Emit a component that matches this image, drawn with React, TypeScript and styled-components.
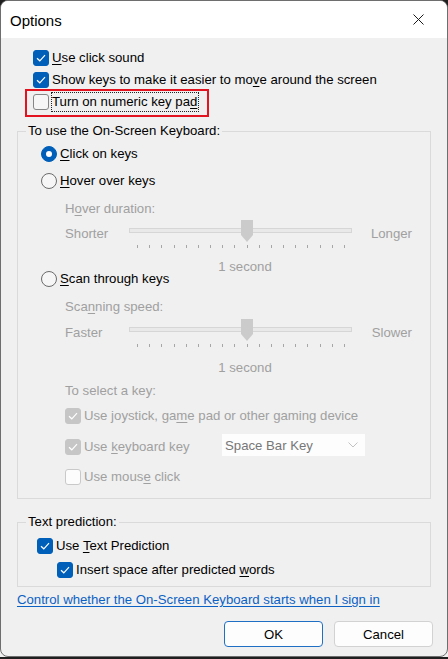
import styled, { createGlobalStyle } from 'styled-components';

const GlobalStyle = createGlobalStyle`
  html, body {
    margin: 0;
    padding: 0;
  }

  body {
    background: linear-gradient(#1f1f1f 0 24px, #f0f0f0 24px);
    font-family: 'Liberation Sans', Arial, sans-serif;
  }
`;

type BoxState = 'on' | 'off' | 'dimOn' | 'dimOff';

function Check() {
  return (
    <svg width="10" height="8" viewBox="0 0 10 8">
      <path d="M1 4.2 L3.8 6.8 L9 1.2" fill="none" stroke="#fff" strokeWidth="1.2" />
    </svg>
  );
}

function CheckBox({ state }: { state: BoxState }) {
  return <Box $state={state}>{(state === 'on' || state === 'dimOn') && <Check />}</Box>;
}

function Radio({ checked }: { checked?: boolean }) {
  return <Circle $checked={checked} />;
}

function Slider({ left, right }: { left: string; right: string }) {
  const ticks = Array.from({ length: 18 });
  return (
    <SliderRow>
      <SideLabel>{left}</SideLabel>
      <TrackArea>
        <Rail />
        <Thumb width="12" height="23" viewBox="0 0 12 23">
          <polygon points="0,0 12,0 12,15 6,22 0,15" fill="#cbcbcb" />
        </Thumb>
        <Ticks>
          {ticks.map((_, i) => (
            <Tick key={i} />
          ))}
        </Ticks>
      </TrackArea>
      <SideLabel $right>{right}</SideLabel>
    </SliderRow>
  );
}

export default function App() {
  return (
    <>
      <GlobalStyle />
      <Window>
        <TitleBar>
          <Title>Options</Title>
          <CloseButton>
            <svg width="11" height="11" viewBox="0 0 11 11">
              <path d="M0.5 0.5 L10.5 10.5 M10.5 0.5 L0.5 10.5" stroke="#1b1b1b" strokeWidth="1" />
            </svg>
          </CloseButton>
        </TitleBar>

        <Body>
          <Row $indent={32} $mt={12}>
            <CheckBox state="on" />
            <Label>
              <u>U</u>se click sound
            </Label>
          </Row>
          <Row $indent={32} $mt={6}>
            <CheckBox state="on" />
            <Label>
              Show keys to make it easier to mo<u>v</u>e around the screen
            </Label>
          </Row>
          <Row $indent={32} $mt={6}>
            <CheckBox state="off" />
            <FocusLabel>
              Turn on numeric key pa<u>d</u>
            </FocusLabel>
            <Highlight />
          </Row>

          <Group $mt={12}>
            <Legend>To use the On-Screen Keyboard:</Legend>
            <Row $indent={23} $mt={6}>
              <Radio checked />
              <Label>
                <u>C</u>lick on keys
              </Label>
            </Row>
            <Row $indent={23} $mt={11}>
              <Radio />
              <Label>
                <u>H</u>over over keys
              </Label>
            </Row>
            <Row $indent={47} $mt={12}>
              <Label $dim $flush>
                H<u>o</u>ver duration:
              </Label>
            </Row>
            <SliderWrap $mt={3}>
              <Slider left="Shorter" right="Longer" />
            </SliderWrap>
            <ValueRow $mt={10}>1 second</ValueRow>

            <Row $indent={23} $mt={-3}>
              <Radio />
              <Label>
                <u>S</u>can through keys
              </Label>
            </Row>
            <Row $indent={47} $mt={12}>
              <Label $dim $flush>
                Sca<u>n</u>ning speed:
              </Label>
            </Row>
            <SliderWrap $mt={4}>
              <Slider left="Faster" right="Slower" />
            </SliderWrap>
            <ValueRow $mt={12}>1 second</ValueRow>

            <Row $indent={47} $mt={8}>
              <Label $dim $flush>
                To select a key:
              </Label>
            </Row>
            <Row $indent={47} $mt={9}>
              <CheckBox state="dimOn" />
              <Label $dim>
                Use joystick, ga<u>m</u>e pad or other gaming device
              </Label>
            </Row>
            <KeyRow $mt={14}>
              <KeyLabel>
                <CheckBox state="dimOn" />
                <Label $dim>
                  Use <u>k</u>eyboard key
                </Label>
              </KeyLabel>
              <Dropdown>
                <span>Space Bar Key</span>
                <svg width="10" height="6" viewBox="0 0 10 6">
                  <path d="M0.5 0.5 L5 5 L9.5 0.5" fill="none" stroke="#c2c2c2" strokeWidth="1" />
                </svg>
              </Dropdown>
            </KeyRow>
            <Row $indent={47} $mt={15}>
              <CheckBox state="dimOff" />
              <Label $dim>
                Use mous<u>e</u> click
              </Label>
            </Row>
            <GroupEnd $h={13} />
          </Group>

          <Group $mt={14}>
            <Legend>Text prediction:</Legend>
            <Row $indent={19} $mt={7}>
              <CheckBox state="on" />
              <Label>
                Use <u>T</u>ext Prediction
              </Label>
            </Row>
            <Row $indent={39} $mt={8}>
              <CheckBox state="on" />
              <Label>
                Insert space after predicted <u>w</u>ords
              </Label>
            </Row>
            <GroupEnd $h={8} />
          </Group>

          <Link href="#">Control whether the On-Screen Keyboard starts when I sign in</Link>

          <Buttons>
            <Button $primary>OK</Button>
            <Button>Cancel</Button>
          </Buttons>
        </Body>
      </Window>
    </>
  );
}

const Window = styled.div`
  box-sizing: border-box;
  width: 448px;
  height: 657px;
  border: 1px solid #6e6e6e;
  border-radius: 8px;
  overflow: hidden;
  background: #f0f0f0;
  display: flex;
  flex-direction: column;
  color: #000;
  font-size: 13.2px;
`;

const TitleBar = styled.div`
  height: 37px;
  flex: none;
  background: #ffffff;
  display: flex;
  align-items: center;
  justify-content: space-between;
  padding-left: 9px;
`;

const Title = styled.div`
  font-size: 15px;
  color: #000;
  margin-top: 1px;
`;

const CloseButton = styled.div`
  width: 46px;
  height: 37px;
  display: flex;
  align-items: center;
  justify-content: center;
  margin-right: 6px;
`;

const Body = styled.div`
  flex: 1;
  display: flex;
  flex-direction: column;
`;

const Row = styled.div<{ $indent: number; $mt: number }>`
  position: relative;
  height: 16px;
  display: flex;
  align-items: center;
  margin-top: ${(p) => p.$mt}px;
  padding-left: ${(p) => p.$indent}px;
`;

const Box = styled.div<{ $state: BoxState }>`
  box-sizing: border-box;
  width: 16px;
  height: 16px;
  flex: none;
  border-radius: 3px;
  display: flex;
  align-items: center;
  justify-content: center;
  background: ${(p) =>
    p.$state === 'on' ? '#005fb8' : p.$state === 'dimOn' ? '#c6c6c6' : p.$state === 'dimOff' ? '#fcfcfc' : '#f6f6f6'};
  border: 1px solid
    ${(p) =>
      p.$state === 'on' ? '#005fb8' : p.$state === 'dimOn' ? '#c6c6c6' : p.$state === 'dimOff' ? '#c9c9c9' : '#868686'};
`;

const Circle = styled.div<{ $checked?: boolean }>`
  box-sizing: border-box;
  width: 16px;
  height: 16px;
  flex: none;
  border-radius: 50%;
  background: ${(p) => (p.$checked ? '#005fb8' : '#f6f6f6')};
  border: 1px solid ${(p) => (p.$checked ? '#005fb8' : '#6b6b6b')};
  display: flex;
  align-items: center;
  justify-content: center;

  &::after {
    content: '';
    display: ${(p) => (p.$checked ? 'block' : 'none')};
    width: 6px;
    height: 6px;
    border-radius: 50%;
    background: #fff;
  }
`;

const Label = styled.span<{ $dim?: boolean; $flush?: boolean }>`
  margin-left: ${(p) => (p.$flush ? 0 : 3)}px;
  line-height: 16px;
  white-space: nowrap;
  color: ${(p) => (p.$dim ? '#a0a0a0' : '#000')};

  u {
    text-underline-offset: 2px;
  }
`;

const FocusLabel = styled.span`
  margin-left: 2px;
  padding-right: 1px;
  line-height: 18px;
  white-space: nowrap;
  border: 1px dotted #222;

  u {
    text-underline-offset: 2px;
  }
`;

const Highlight = styled.div`
  position: absolute;
  left: 24px;
  top: -5px;
  width: 184px;
  height: 28px;
  box-sizing: border-box;
  border: 2px solid #e3141f;
  pointer-events: none;
`;

const Group = styled.fieldset<{ $mt: number }>`
  margin: ${(p) => p.$mt}px 16px 0 16px;
  padding: 0;
  border: 1px solid #dadada;
  min-width: 0;
`;

const Legend = styled.legend`
  margin-left: 8px;
  padding: 0 2px;
  line-height: 18px;
  color: #000;
`;

const GroupEnd = styled.div<{ $h: number }>`
  height: ${(p) => p.$h}px;
`;

const SliderWrap = styled.div<{ $mt: number }>`
  margin-top: ${(p) => p.$mt}px;
  padding-left: 47px;
`;

const SliderRow = styled.div`
  display: flex;
  height: 30px;
  color: #a0a0a0;
`;

const SideLabel = styled.div<{ $right?: boolean }>`
  width: ${(p) => (p.$right ? 60 : 64)}px;
  margin-top: 6px;
  line-height: 16px;
  text-align: ${(p) => (p.$right ? 'right' : 'left')};
`;

const TrackArea = styled.div`
  position: relative;
  width: 223px;
  display: flex;
  flex-direction: column;
`;

const Rail = styled.div`
  box-sizing: border-box;
  margin-top: 8px;
  height: 5px;
  background: #e9e9e9;
  border: 1px solid #d6d6d6;
`;

const Thumb = styled.svg`
  position: absolute;
  left: 112px;
  top: 0;
`;

const Ticks = styled.div`
  margin-top: 12px;
  padding: 0 7px 0 8px;
  display: flex;
  justify-content: space-between;
`;

const Tick = styled.div`
  width: 1px;
  height: 3px;
  background: #a6a6a6;
`;

const ValueRow = styled.div<{ $mt: number }>`
  margin-top: ${(p) => p.$mt}px;
  height: 14px;
  line-height: 14px;
  padding-left: 120px;
  width: 214px;
  text-align: center;
  color: #a0a0a0;
`;

const KeyRow = styled.div<{ $mt: number }>`
  margin-top: ${(p) => p.$mt}px;
  height: 16px;
  padding-left: 47px;
  display: grid;
  grid-template-columns: 157px 143px;
  align-items: center;
`;

const KeyLabel = styled.div`
  display: flex;
  align-items: center;
`;

const Dropdown = styled.div`
  box-sizing: border-box;
  height: 22px;
  margin-top: -4px;
  background: #fdfdfd;
  display: flex;
  align-items: center;
  justify-content: space-between;
  padding: 0 7px 0 3px;
  color: #777777;
  font-size: 13.2px;
`;

const Link = styled.a`
  margin: 5px 0 0 16px;
  line-height: 16px;
  color: #0b62c4;
  text-decoration: underline;
  text-underline-offset: 2px;
  white-space: nowrap;
`;

const Buttons = styled.div`
  margin: 13px 14px 0 0;
  display: flex;
  justify-content: flex-end;
  gap: 11px;
`;

const Button = styled.button<{ $primary?: boolean }>`
  width: 99px;
  height: 26px;
  box-sizing: border-box;
  border-radius: 4px;
  border: 1px solid ${(p) => (p.$primary ? '#1f6fc5' : '#d2d2d2')};
  background: #fdfdfd;
  font-family: 'Liberation Sans', Arial, sans-serif;
  font-size: 13.2px;
  color: #000;
  padding: 0;
`;
